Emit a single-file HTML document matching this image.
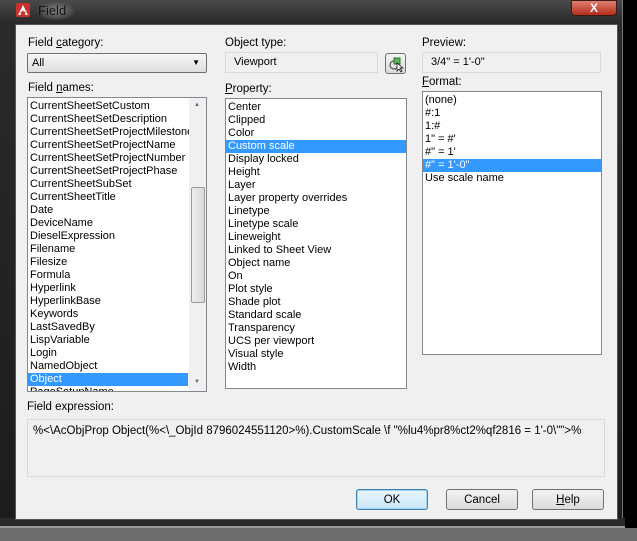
<!DOCTYPE html>
<html><head><style>
*{margin:0;padding:0;box-sizing:border-box}
body{width:637px;height:541px;background:#000;position:relative;overflow:hidden;font-family:"Liberation Sans",Tahoma,sans-serif;font-size:11px;color:#000}
.abs{position:absolute}
.frame{left:0;top:0;width:623px;height:528px;background:linear-gradient(180deg,#4a4a4a 0,#2a2a2a 22px,#1c1c1c 100%);border:1px solid #777;border-left:none;border-top:none;border-radius:0 0 6px 0}
.client{left:15px;top:24px;width:603px;height:496px;background:#f0f0f0;border:1px solid #555}
.lbl{font-size:11.5px;color:#000}
.box{background:#fff;border:1px solid #828790}
.ro{background:#f0f0f0;border:1px solid #d9d9d9;padding-left:8px;line-height:19px}
.list .it{height:13px;line-height:13px;padding-left:2px;white-space:nowrap;overflow:hidden}
.sel{background:#3399ff;color:#fff}
.btn{border:1px solid #707070;border-radius:3px;background:linear-gradient(#f2f2f2,#dcdcdc);text-align:center;line-height:20px;font-size:11.5px}
</style></head><body>
<div class="abs frame"></div>
<div class="abs" style="left:0;top:528px;width:637px;height:13px;background:#6e6e6e"></div>
<div class="abs" style="left:0;top:518px;width:625px;height:10px;background:#2a2a2a;border-bottom:2px solid #999"></div>
<svg class="abs" style="left:16px;top:3px" width="14" height="14"><rect width="14" height="14" rx="2" fill="#c9322c"/><path d="M7 2 L12 12 H9.5 L7 7 L4.5 12 H2 Z" fill="#fff"/><path d="M4.5 9.5 H9.5" stroke="#c9322c" stroke-width="1.5"/></svg>
<div class="abs" style="left:36px;top:1px;width:40px;height:20px;background:radial-gradient(ellipse at center,rgba(200,200,200,.55),rgba(200,200,200,0) 70%)"></div>
<div class="abs" style="left:38px;top:3px;font-size:13px;color:#111">Field</div>
<div class="abs" style="left:571px;top:0;width:46px;height:16px;border-radius:0 0 4px 4px;background:linear-gradient(#e08070,#b42c1c);border:1px solid #3a1a14;color:#fff;text-align:center;font-weight:bold;font-size:12px;line-height:14px">X</div>
<div class="abs client"></div>

<div class="abs lbl" style="left:28px;top:37px">Field <u>c</u>ategory:</div>
<div class="abs" style="left:27px;top:53px;width:180px;height:20px;border:1px solid #707070;border-radius:2px;background:linear-gradient(#f6f6f6,#dedede);padding-left:4px;line-height:18px">All<span style="position:absolute;right:6px;top:0;font-size:8px">▼</span></div>
<div class="abs lbl" style="left:28px;top:82px">Field <u>n</u>ames:</div>
<div class="abs box list" style="left:27px;top:97px;width:180px;height:295px;overflow:hidden;padding-top:2px">
<div class="it">CurrentSheetSetCustom</div><div class="it">CurrentSheetSetDescription</div><div class="it">CurrentSheetSetProjectMilestone</div><div class="it">CurrentSheetSetProjectName</div><div class="it">CurrentSheetSetProjectNumber</div><div class="it">CurrentSheetSetProjectPhase</div><div class="it">CurrentSheetSubSet</div><div class="it">CurrentSheetTitle</div><div class="it">Date</div><div class="it">DeviceName</div><div class="it">DieselExpression</div><div class="it">Filename</div><div class="it">Filesize</div><div class="it">Formula</div><div class="it">Hyperlink</div><div class="it">HyperlinkBase</div><div class="it">Keywords</div><div class="it">LastSavedBy</div><div class="it">LispVariable</div><div class="it">Login</div><div class="it">NamedObject</div><div class="it sel" style="width:160px">Object</div><div class="it">PageSetupName</div>
<div class="abs" style="right:0;top:0;width:17px;height:293px;background:#f0f0f0"></div>
<div class="abs" style="right:6px;top:4px;font-size:6px;color:#666">▲</div>
<div class="abs" style="right:6px;top:281px;font-size:6px;color:#666">▼</div>
<div class="abs" style="right:1px;top:89px;width:14px;height:116px;border:1px solid #9a9a9a;border-radius:2px;background:linear-gradient(90deg,#eee,#d8d8d8)"></div>
</div>

<div class="abs lbl" style="left:225px;top:37px">Object type:</div>
<div class="abs ro" style="left:225px;top:52px;width:153px;height:21px">Viewport</div>
<div class="abs" style="left:385px;top:53px;width:21px;height:21px;border:1px solid #707070;border-radius:3px;background:linear-gradient(#f4f4f4,#dadada)">
<svg width="19" height="19"><circle cx="8" cy="11" r="4" fill="none" stroke="#555" stroke-width="1.2"/><rect x="8" y="4" width="6" height="6" fill="#5cb85c" stroke="#2e6e2e"/><path d="M11 9 L11 17 L13 15 L15 18 L16 17 L14 14 L17 14 Z" fill="#fff" stroke="#000" stroke-width=".7"/></svg></div>
<div class="abs lbl" style="left:225px;top:83px"><u>P</u>roperty:</div>
<div class="abs box list" style="left:225px;top:98px;width:182px;height:291px;padding-top:2px">
<div class="it">Center</div><div class="it">Clipped</div><div class="it">Color</div><div class="it sel">Custom scale</div><div class="it">Display locked</div><div class="it">Height</div><div class="it">Layer</div><div class="it">Layer property overrides</div><div class="it">Linetype</div><div class="it">Linetype scale</div><div class="it">Lineweight</div><div class="it">Linked to Sheet View</div><div class="it">Object name</div><div class="it">On</div><div class="it">Plot style</div><div class="it">Shade plot</div><div class="it">Standard scale</div><div class="it">Transparency</div><div class="it">UCS per viewport</div><div class="it">Visual style</div><div class="it">Width</div>
</div>

<div class="abs lbl" style="left:422px;top:37px">Preview:</div>
<div class="abs ro" style="left:422px;top:52px;width:179px;height:21px">3/4" = 1'-0"</div>
<div class="abs lbl" style="left:422px;top:76px"><u>F</u>ormat:</div>
<div class="abs box list" style="left:422px;top:91px;width:180px;height:264px;padding-top:2px">
<div class="it">(none)</div><div class="it">#:1</div><div class="it">1:#</div><div class="it">1" = #'</div><div class="it">#" = 1'</div><div class="it sel">#" = 1'-0"</div><div class="it">Use scale name</div>
</div>

<div class="abs lbl" style="left:27px;top:401px">Field expression:</div>
<div class="abs" style="left:27px;top:419px;width:578px;height:58px;border:1px solid #d9d9d9;background:#f0f0f0;padding:5px 0 0 5px;font-size:11.5px;white-space:nowrap">%&lt;\AcObjProp Object(%&lt;\_ObjId 8796024551120&gt;%).CustomScale \f "%lu4%pr8%ct2%qf2816 = 1'-0\""&gt;%</div>

<div class="abs btn" style="left:356px;top:489px;width:72px;height:21px;border-color:#3c7fb1;box-shadow:inset 0 0 0 1px #9fd6f5;background:linear-gradient(#eaf6fd,#c9e6f7)">OK</div>
<div class="abs btn" style="left:446px;top:489px;width:72px;height:21px">Cancel</div>
<div class="abs btn" style="left:532px;top:489px;width:72px;height:21px"><u>H</u>elp</div>
</body></html>
